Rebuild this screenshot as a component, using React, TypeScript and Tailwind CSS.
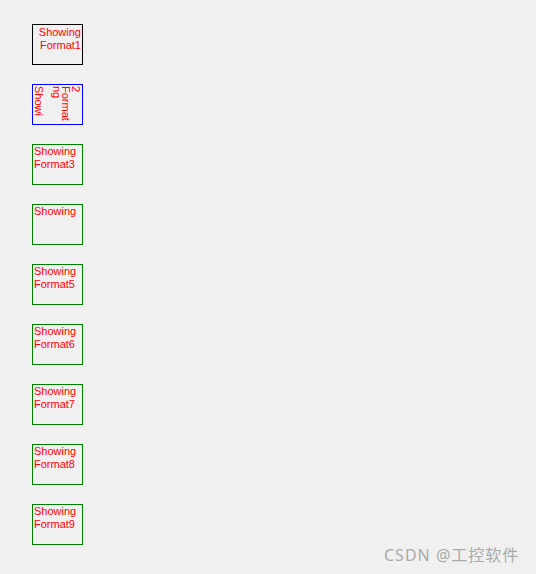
import React from "react";

const boxes = [
  { label: "Format3" },
  { label: "" },
  { label: "Format5" },
  { label: "Format6" },
  { label: "Format7" },
  { label: "Format8" },
  { label: "Format9" },
];

export default function App() {
  return (
    <div
      className="relative h-[574px] w-[536px] overflow-hidden bg-[#f0f0f0] text-[11px] leading-[13px] text-[#ff0000]"
      style={{ fontFamily: '"Liberation Sans", Arial, sans-serif' }}
    >
      <div className="flex flex-col gap-[19px] pl-[32px] pt-[24px]">
        <div className="h-[41px] w-[51px] border border-black pr-[1px] pt-[1px] text-right">
          Showing
          <br />
          Format1
        </div>
        {/* vertical text box */}
        <div className="flex h-[41px] w-[51px] items-start border border-[#0000ff] pt-[1px]">
          <span className="ml-[-1px] w-[18px] shrink-0 [writing-mode:vertical-lr]">Showi</span>
          <span className="w-[9px] shrink-0 [writing-mode:vertical-lr]">ng</span>
          <span className="w-[10px] shrink-0 [writing-mode:vertical-lr]">Format</span>
          <span className="w-[12px] shrink-0 [writing-mode:vertical-lr]">2</span>
        </div>
        {boxes.map((b, i) => (
          <div
            key={i}
            className="h-[41px] w-[51px] border border-[#008000] pl-[1px]"
          >
            Showing
            {b.label && (
              <>
                <br />
                {b.label}
              </>
            )}
          </div>
        ))}
      </div>
      <div
        className="absolute left-[384px] top-[544px] text-[16px] leading-[22px] tracking-[1px] text-[#aaaaaa]"
        style={{ fontFamily: '"Noto Sans", "Noto Sans CJK SC", sans-serif' }}
      >
        CSDN @工控软件
      </div>
    </div>
  );
}
